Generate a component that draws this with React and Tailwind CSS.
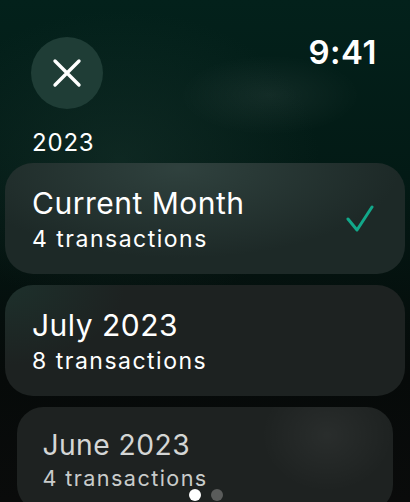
import React from 'react';

const font = { fontFamily: 'Inter, "Noto Sans", sans-serif' };

function Card({ title, sub, checked, dim, className }) {
  return (
    <div className={`relative flex items-center rounded-[28px] h-[111px] pl-[27px] pr-[31px] pt-[2px] ${className}`}>
      <div className="flex flex-col">
        <span className={`text-[30px] leading-[34px] tracking-[0.5px] ${dim ? 'text-[#d4d6d5]' : 'text-white'}`}>{title}</span>
        <span className={`text-[23px] leading-[30px] mt-[4px] tracking-[1.5px] ${dim ? 'text-[#c9cccb]' : 'text-white'}`}>{sub}</span>
      </div>
      {checked && (
        <svg className="ml-auto mt-[-2px]" width="28" height="28" viewBox="0 0 28 28" fill="none">
          <path d="M2 14 L11 25 L26 2" stroke="#12a88a" strokeWidth="3" strokeLinecap="round" strokeLinejoin="round" />
        </svg>
      )}
    </div>
  );
}

export default function App() {
  return (
    <div
      style={font}
      className="relative w-[410px] h-[502px] overflow-hidden bg-[#041612] bg-[radial-gradient(ellipse_90px_40px_at_270px_95px,rgba(255,255,255,0.06),transparent),radial-gradient(ellipse_200px_150px_at_120px_160px,rgba(40,70,62,0.3),transparent),linear-gradient(180deg,#03211b_0%,#031a15_35%,#060a09_75%,#0a0b0b_100%)]"
    >
      <div className="flex justify-between pl-[31px] pr-[33px] pt-[37px]">
        <div className="w-[72px] h-[72px] rounded-full bg-[#1f3d36] flex items-center justify-center">
          <svg width="30" height="30" viewBox="0 0 30 30" fill="none">
            <path d="M3 3 L27 27 M27 3 L3 27" stroke="white" strokeWidth="3.4" strokeLinecap="round" />
          </svg>
        </div>
        <span className="text-white font-semibold text-[33px] leading-none mt-[-1px] tracking-[0.5px]">9:41</span>
      </div>
      <div className="pl-[32px] mt-[20px] text-white text-[24px] leading-[28px] tracking-[0.8px]">2023</div>
      <div className="flex flex-col gap-[11px] px-[5px] mt-[6px]">
        <Card
          title="Current Month"
          sub="4 transactions"
          checked
          className="bg-[#1d2927] bg-[radial-gradient(ellipse_220px_90px_at_175px_5px,rgba(70,95,90,0.45),transparent)]"
        />
        <Card
          title="July 2023"
          sub="8 transactions"
          className="bg-[#1d2221] bg-[radial-gradient(ellipse_120px_80px_at_0px_0px,rgba(30,70,60,0.4),transparent)]"
        />
        <Card
          title="June 2023"
          sub="4 transactions"
          dim
          className="bg-[#1e2221] origin-top scale-[0.94] bg-[radial-gradient(ellipse_70px_60px_at_330px_30px,rgba(255,255,255,0.05),transparent)]"
        />
      </div>
      <div className="absolute left-0 right-0 bottom-[1px] flex justify-center gap-[10px] pl-[1px]">
        <span className="w-[12px] h-[12px] rounded-full bg-white" />
        <span className="w-[12px] h-[12px] rounded-full bg-[#5a5c5b]" />
      </div>
    </div>
  );
}
